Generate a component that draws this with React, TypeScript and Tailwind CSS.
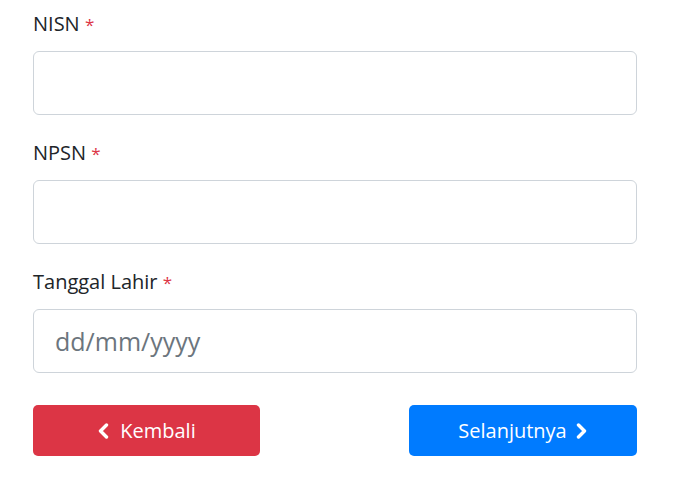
import { useState } from 'react';

function ChevronLeft() {
  return (
    <svg width="12" height="16" viewBox="0 0 12 16" aria-hidden="true">
      <path d="M9.5 2 L3.5 8 L9.5 14" fill="none" stroke="currentColor" strokeWidth="3.4" strokeLinecap="round" strokeLinejoin="round" />
    </svg>
  );
}

function ChevronRight() {
  return (
    <svg width="12" height="16" viewBox="0 0 12 16" aria-hidden="true">
      <path d="M2.5 2 L8.5 8 L2.5 14" fill="none" stroke="currentColor" strokeWidth="3.4" strokeLinecap="round" strokeLinejoin="round" />
    </svg>
  );
}

function Field({ label, placeholder, value, onChange }: { label: string; placeholder?: string; value: string; onChange: (v: string) => void }) {
  return (
    <div className="mb-[23px]">
      <label className="block h-[30px] mb-[12px] text-[20px] leading-[30px] text-[#212529]">
        {label} <span className="text-[17px] leading-none text-[#dc3545]">*</span>
      </label>
      <input
        type="text"
        value={value}
        placeholder={placeholder}
        onChange={(e) => onChange(e.target.value)}
        className="block w-full h-[64px] px-[21px] text-[25px] text-[#495057] placeholder:text-[#6c757d] bg-white border border-[#ced4da] rounded-[6px] outline-none"
      />
    </div>
  );
}

export default function App() {
  const [nisn, setNisn] = useState('');
  const [npsn, setNpsn] = useState('');
  const [tgl, setTgl] = useState('');

  return (
    <div className="min-h-[495px] bg-white pl-[33px] pr-[63px] pt-[9px]" style={{ fontFamily: '"Open Sans", "Noto Sans", sans-serif' }}>
      <Field label="NISN" value={nisn} onChange={setNisn} />
      <Field label="NPSN" value={npsn} onChange={setNpsn} />
      <Field label="Tanggal Lahir" placeholder="dd/mm/yyyy" value={tgl} onChange={setTgl} />
      <div className="flex justify-between pt-[9px]">
        <button className="flex items-center justify-center gap-[11px] w-[227px] h-[51px] rounded-[5px] bg-[#dc3545] text-white text-[20px]">
          <ChevronLeft />
          <span>Kembali</span>
        </button>
        <button className="flex items-center justify-center gap-[9px] w-[228px] h-[51px] rounded-[5px] bg-[#007bff] text-white text-[20px]">
          <span>Selanjutnya</span>
          <ChevronRight />
        </button>
      </div>
    </div>
  );
}
